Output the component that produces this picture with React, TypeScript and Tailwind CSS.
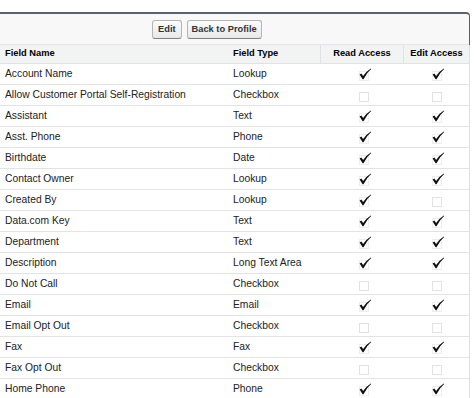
import React from "react"

type Row = { name: string; type: string; read: boolean; edit: boolean }

const rows: Row[] = [
  { name: "Account Name", type: "Lookup", read: true, edit: true },
  { name: "Allow Customer Portal Self-Registration", type: "Checkbox", read: false, edit: false },
  { name: "Assistant", type: "Text", read: true, edit: true },
  { name: "Asst. Phone", type: "Phone", read: true, edit: true },
  { name: "Birthdate", type: "Date", read: true, edit: true },
  { name: "Contact Owner", type: "Lookup", read: true, edit: true },
  { name: "Created By", type: "Lookup", read: true, edit: false },
  { name: "Data.com Key", type: "Text", read: true, edit: true },
  { name: "Department", type: "Text", read: true, edit: true },
  { name: "Description", type: "Long Text Area", read: true, edit: true },
  { name: "Do Not Call", type: "Checkbox", read: false, edit: false },
  { name: "Email", type: "Email", read: true, edit: true },
  { name: "Email Opt Out", type: "Checkbox", read: false, edit: false },
  { name: "Fax", type: "Fax", read: true, edit: true },
  { name: "Fax Opt Out", type: "Checkbox", read: false, edit: false },
  { name: "Home Phone", type: "Phone", read: true, edit: true },
]

function CheckIcon({ checked }: { checked: boolean }) {
  return (
    <svg width="14" height="13" viewBox="0 0 14 13" className="block">
      <rect x="1.5" y="3.5" width="9" height="9" fill="none" stroke={checked ? "#eeeeee" : "#e2e2e2"} />
      {checked && (
        <path d="M1.6 6.6 L3.4 5.5 L5.1 8 Q8 3.4 12.8 0.4 L13.2 1.1 Q8.9 4.6 5.5 11.2 L4.6 11.2 Z" fill="#111" />
      )}
    </svg>
  )
}

export default function App() {
  return (
    <div className="w-[474px] h-[398px] overflow-hidden bg-white font-['Liberation_Sans',Arial,sans-serif] text-[#222]">
      <div className="mt-[12px] w-[470px] border-t-2 border-r border-[#5b616c] rounded-tr-[4px] bg-[#f8f8f8]">
        <div className="h-[31px] flex items-start pt-[6px] pl-[152px] gap-[5px] border-b border-[#e3e5e7]">
          <button className="h-[19px] px-[5px] rounded-[3px] border border-[#b5b5b5] border-b-[#7f7f7f] bg-gradient-to-b from-[#fcfcfc] to-[#e8e8e8] text-[9.3px] font-bold text-[#333] leading-none">
            Edit
          </button>
          <button className="h-[19px] px-[4px] rounded-[3px] border border-[#b5b5b5] border-b-[#7f7f7f] bg-gradient-to-b from-[#fcfcfc] to-[#e8e8e8] text-[9.3px] font-bold text-[#333] leading-none">
            Back to Profile
          </button>
        </div>
        <div className="bg-white border-r border-[#e0e0e0] -mr-px">
          <div className="flex h-[19px] bg-[#f2f3f3] border-b border-[#e0e3e5] text-[9.3px] font-bold text-[#000]">
            <div className="w-[228px] pl-[5px] flex items-center">Field Name</div>
            <div className="w-[93px] pl-[5px] flex items-center border-r border-[#e0e3e5]">Field Type</div>
            <div className="w-[83px] flex items-center justify-center border-r border-[#e0e3e5]">Read Access</div>
            <div className="flex-1 flex items-center justify-center">Edit Access</div>
          </div>
          {rows.map((r) => (
            <div key={r.name} className="flex h-[21px] border-b border-[#e3e3e3] text-[10.3px]">
              <div className="w-[228px] pl-[5px] flex items-center">{r.name}</div>
              <div className="w-[93px] pl-[5px] flex items-center">{r.type}</div>
              <div className="w-[83px] flex items-center justify-center pl-[4px]">
                <CheckIcon checked={r.read} />
              </div>
              <div className="flex-1 flex items-center justify-center pl-[2px]">
                <CheckIcon checked={r.edit} />
              </div>
            </div>
          ))}
        </div>
      </div>
    </div>
  )
}
